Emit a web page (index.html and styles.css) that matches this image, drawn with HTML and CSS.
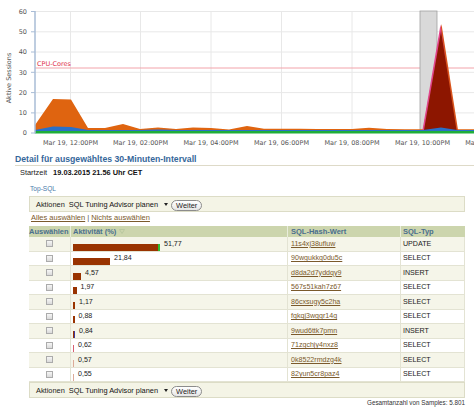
FILE: index.html
```html
<!DOCTYPE html>
<html lang="de">
<head>
<meta charset="utf-8">
<title>Top-SQL</title>
<link rel="stylesheet" href="styles.css">
</head>
<body>
<svg class="chart" width="474" height="153" viewBox="0 0 474 153" xmlns="http://www.w3.org/2000/svg">
  <g stroke="#e8e8e8" stroke-width="1">
    <line x1="35" x2="474" y1="11.5" y2="11.5"/>
    <line x1="35" x2="474" y1="31.8" y2="31.8"/>
    <line x1="35" x2="474" y1="52" y2="52"/>
    <line x1="35" x2="474" y1="72.3" y2="72.3"/>
    <line x1="35" x2="474" y1="92.6" y2="92.6"/>
    <line x1="35" x2="474" y1="112.9" y2="112.9"/>
    <line x1="70.5" x2="70.5" y1="11" y2="133"/>
    <line x1="140.5" x2="140.5" y1="11" y2="133"/>
    <line x1="211" x2="211" y1="11" y2="133"/>
    <line x1="281.5" x2="281.5" y1="11" y2="133"/>
    <line x1="352" x2="352" y1="11" y2="133"/>
    <line x1="422.5" x2="422.5" y1="11" y2="133"/>
  </g>
  <line x1="35" x2="474" y1="68" y2="68" stroke="#f2a3aa" stroke-width="1"/>
  <rect x="420" y="11" width="17" height="120" fill="#d9d9d9" stroke="#a0a0a0" stroke-width="0.8"/>
  <polygon fill="#df6410" points="35,125 53,99 71,99.5 88,128 105,128 123,124 140,129 158,127.5 176,129 193,127.5 211,128 229,129.5 247,126 264,128.8 282,128.8 300,128.8 317,129 335,129 352,129 369,127.7 387,129 405,129.3 423,129.3 441,128.5 457,129.3 474,129.3 474,133 35,133"/>
  <polygon fill="#d9541c" points="423,130 441.5,24 458,130"/>
  <polygon fill="#e2468c" points="422.5,130 440.5,24.5 455,130"/>
  <polygon fill="#8d1600" points="424,130 441,31 456.5,130"/>
  <polygon fill="#2a70c8" points="35,130 53,126.5 71,127 88,130 140,130 158,129.5 176,130 423,130 441,127.5 457,130 474,130 474,133 35,133"/>
  <rect x="35" y="131" width="439" height="2.5" fill="#1fae3a"/>
  <g stroke="#a9bcd6" stroke-width="1">
    <line x1="35" x2="35" y1="11" y2="133.5" stroke-width="1.5"/>
    <line x1="31" x2="35" y1="11.5" y2="11.5"/>
    <line x1="31" x2="35" y1="31.8" y2="31.8"/>
    <line x1="31" x2="35" y1="52" y2="52"/>
    <line x1="31" x2="35" y1="72.3" y2="72.3"/>
    <line x1="31" x2="35" y1="92.6" y2="92.6"/>
    <line x1="31" x2="35" y1="112.9" y2="112.9"/>
    <line x1="31" x2="35" y1="133" y2="133"/>
  </g>
  <g class="axis-text" font-family="DejaVu Sans, sans-serif" font-size="6.5" fill="#555">
    <text x="27" y="13.8" text-anchor="end">60</text>
    <text x="27" y="34.1" text-anchor="end">50</text>
    <text x="27" y="54.3" text-anchor="end">40</text>
    <text x="27" y="74.6" text-anchor="end">30</text>
    <text x="27" y="94.9" text-anchor="end">20</text>
    <text x="27" y="115.2" text-anchor="end">10</text>
    <text x="27" y="135.3" text-anchor="end">0</text>
    <text x="70.5" y="145" text-anchor="middle">Mar 19, 12:00PM</text>
    <text x="140.5" y="145" text-anchor="middle">Mar 19, 02:00PM</text>
    <text x="211" y="145" text-anchor="middle">Mar 19, 04:00PM</text>
    <text x="281.5" y="145" text-anchor="middle">Mar 19, 06:00PM</text>
    <text x="352" y="145" text-anchor="middle">Mar 19, 08:00PM</text>
    <text x="422.5" y="145" text-anchor="middle">Mar 19, 10:00PM</text>
    <text x="493" y="145" text-anchor="middle">Mar 20, 12:00AM</text>
    <text transform="translate(10.5 78) rotate(-90)" text-anchor="middle">Aktive Sessions</text>
    <text x="37" y="66.3" fill="#e0304a">CPU-Cores</text>
  </g>
</svg>

<h2 class="section-title">Detail für ausgewähltes 30-Minuten-Intervall</h2>
<div class="start"><span>Startzeit</span><b>19.03.2015 21.56 Uhr CET</b></div>

<div class="region">
  <div class="region-title">Top-SQL</div>
  <div class="actions">
    <span class="label">Aktionen</span>
    <span class="fake-select">SQL Tuning Advisor planen<span class="caret"></span></span>
    <button class="btn" type="button">Weiter</button>
  </div>
  <div class="links"><a href="#">Alles auswählen</a><span class="sep">|</span><a href="#">Nichts auswählen</a></div>

  <div class="grid">
    <div class="th th-first">Auswählen</div>
    <div class="th th-act">Aktivität (%)<svg class="sort" width="6" height="5" viewBox="0 0 6 5"><polygon points="0.5,0.5 5.5,0.5 3,4.5" fill="none" stroke="#b4c49c" stroke-width="0.8"/></svg></div>
    <div class="th th-pad">SQL-Hash-Wert</div>
    <div class="th th-pad2">SQL-Typ</div>

    <div class="row odd">
      <div class="td td-cb"><input class="cb" type="checkbox"></div>
      <div class="td td-act"><span class="bar"><span class="seg red" style="width:85px"></span><span class="seg green" style="width:2px"></span></span><span class="num">51,77</span></div>
      <div class="td td-hash"><a href="#">11s4xj38ufluw</a></div>
      <div class="td td-typ">UPDATE</div>
    </div>
    <div class="row">
      <div class="td td-cb"><input class="cb" type="checkbox"></div>
      <div class="td td-act"><span class="bar"><span class="seg red" style="width:37px"></span></span><span class="num">21,84</span></div>
      <div class="td td-hash"><a href="#">90wgukkg0du5c</a></div>
      <div class="td td-typ">SELECT</div>
    </div>
    <div class="row odd">
      <div class="td td-cb"><input class="cb" type="checkbox"></div>
      <div class="td td-act"><span class="bar"><span class="seg red" style="width:8px"></span></span><span class="num">4,57</span></div>
      <div class="td td-hash"><a href="#">d8da2d7yddqy9</a></div>
      <div class="td td-typ">INSERT</div>
    </div>
    <div class="row">
      <div class="td td-cb"><input class="cb" type="checkbox"></div>
      <div class="td td-act"><span class="bar"><span class="seg red" style="width:3.5px"></span></span><span class="num">1,97</span></div>
      <div class="td td-hash"><a href="#">567s51kah7z67</a></div>
      <div class="td td-typ">SELECT</div>
    </div>
    <div class="row odd">
      <div class="td td-cb"><input class="cb" type="checkbox"></div>
      <div class="td td-act"><span class="bar"><span class="seg red" style="width:2px"></span></span><span class="num">1,17</span></div>
      <div class="td td-hash"><a href="#">86cxsugy5c2ha</a></div>
      <div class="td td-typ">SELECT</div>
    </div>
    <div class="row">
      <div class="td td-cb"><input class="cb" type="checkbox"></div>
      <div class="td td-act"><span class="bar"><span class="seg red" style="width:1.5px"></span></span><span class="num">0,88</span></div>
      <div class="td td-hash"><a href="#">fgkqj3wggr14g</a></div>
      <div class="td td-typ">SELECT</div>
    </div>
    <div class="row odd">
      <div class="td td-cb"><input class="cb" type="checkbox"></div>
      <div class="td td-act"><span class="bar"><span class="seg red" style="width:1px"></span><span class="seg blue" style="width:1px"></span></span><span class="num">0,84</span></div>
      <div class="td td-hash"><a href="#">9wud6ttk7pmn</a></div>
      <div class="td td-typ">INSERT</div>
    </div>
    <div class="row">
      <div class="td td-cb"><input class="cb" type="checkbox"></div>
      <div class="td td-act"><span class="bar"><span class="seg pink" style="width:1px"></span></span><span class="num">0,62</span></div>
      <div class="td td-hash"><a href="#">71zgchjy4nxz8</a></div>
      <div class="td td-typ">SELECT</div>
    </div>
    <div class="row odd">
      <div class="td td-cb"><input class="cb" type="checkbox"></div>
      <div class="td td-act"><span class="bar"><span class="seg tan" style="width:1px"></span></span><span class="num">0,57</span></div>
      <div class="td td-hash"><a href="#">0k8522rmdzg4k</a></div>
      <div class="td td-typ">SELECT</div>
    </div>
    <div class="row">
      <div class="td td-cb"><input class="cb" type="checkbox"></div>
      <div class="td td-act"><span class="bar"><span class="seg tan" style="width:1px"></span></span><span class="num">0,55</span></div>
      <div class="td td-hash"><a href="#">82yun5cr8paz4</a></div>
      <div class="td td-typ">SELECT</div>
    </div>
  </div>

  <div class="actions actions-bottom">
    <span class="label">Aktionen</span>
    <span class="fake-select">SQL Tuning Advisor planen<span class="caret"></span></span>
    <button class="btn" type="button">Weiter</button>
  </div>
  <div class="total">Gesamtanzahl von Samples: 5.801</div>
</div>
</body>
</html>
```

FILE: styles.css
```css
html, body {
  margin: 0;
  padding: 0;
  background: #ffffff;
}

body {
  width: 474px;
  height: 409px;
  overflow: hidden;
  font-family: "Liberation Sans", Arial, sans-serif;
  color: #222222;
}

.chart {
  display: block;
  width: 474px;
  height: 153px;
}

.section-title {
  margin: 0 0 0 15px;
  font-size: 8.7px;
  line-height: 12px;
  font-weight: bold;
  color: #35679a;
  border-bottom: 1px solid #dedac8;
}

.start {
  display: flex;
  gap: 6px;
  padding: 1px 0 0 20px;
  font-size: 7.4px;
  line-height: 12px;
  color: #222222;
}

.start b {
  color: #111111;
}

.region {
  margin-left: 29px;
  width: 436px;
}

.region-title {
  margin: 5px 0 0 1px;
  font-size: 6.6px;
  line-height: 10px;
  color: #4a7bab;
}

.actions {
  margin-top: 2px;
  height: 14px;
  display: flex;
  align-items: center;
  padding-left: 6px;
  border: 1px solid #dcdcc6;
  background: #f4f4e6;
  font-size: 7.4px;
  color: #222222;
}

.actions-bottom {
  margin-top: 0;
}

.label {
  margin-right: 4px;
}

.fake-select {
  display: flex;
  align-items: center;
  gap: 6px;
  color: #111111;
}

.caret {
  width: 0;
  height: 0;
  border-left: 2.5px solid transparent;
  border-right: 2.5px solid transparent;
  border-top: 3px solid #222222;
}

.btn {
  align-self: flex-end;
  margin: 0 0 0 3px;
  height: 11px;
  padding: 0 4px;
  border: 1px solid #8c8c8c;
  border-radius: 6px;
  background: linear-gradient(#ffffff, #e6e6e6);
  font-family: "Liberation Sans", Arial, sans-serif;
  font-size: 7.4px;
  line-height: 9px;
  color: #222222;
}

.links {
  padding-left: 2px;
  font-size: 7.5px;
  line-height: 12px;
  color: #555555;
}

.links a {
  color: #7b5a2c;
  text-decoration: underline;
}

.sep {
  margin: 0 2px;
}

.grid {
  margin-top: 2px;
  display: grid;
  grid-template-columns: 42px 217px 113px 64px;
  grid-template-rows: 11px repeat(10, 14.5px);
}

.th {
  background: #ccd5ad;
  color: #4a6f8e;
  font-weight: bold;
  font-size: 7.5px;
  line-height: 11px;
  white-space: nowrap;
  border-right: 1px solid #e9eddb;
  box-sizing: border-box;
}

.th-act {
  display: flex;
  align-items: center;
  gap: 3px;
  padding-left: 2px;
}

.th-pad {
  padding-left: 3px;
}

.th-pad2 {
  padding-left: 2px;
  border-right: none;
}

.sort {
  display: block;
}

.row {
  display: contents;
}

.td {
  display: flex;
  align-items: center;
  box-sizing: border-box;
  border-bottom: 1px solid #e3e3d3;
  border-right: 1px solid #e3e3d3;
  background: #ffffff;
  font-size: 7.1px;
  white-space: nowrap;
  color: #222222;
}

.row.odd .td {
  background: #f5f5e9;
}

.td-cb {
  justify-content: center;
}

.cb {
  appearance: none;
  -webkit-appearance: none;
  margin: 0;
  width: 7px;
  height: 7px;
  box-sizing: border-box;
  border: 1px solid #ababab;
  border-radius: 0;
  background: linear-gradient(#f6f6f6, #dadada);
}

.td-act {
  padding-left: 2px;
}

.bar {
  display: flex;
  height: 7px;
  margin-top: 7px;
}

.seg {
  display: block;
  height: 100%;
}

.seg.red { background: #993300; }
.seg.green { background: #2fbf2f; }
.seg.blue { background: #3b3ba6; }
.seg.pink { background: #d86070; }
.seg.tan { background: #dcaa98; }

.num {
  margin-left: 4px;
}

.td-hash {
  padding-left: 3px;
}

.td-hash a {
  color: #7b5a2c;
  text-decoration: underline;
}

.td-typ {
  padding-left: 2px;
}

.total {
  text-align: right;
  font-size: 6.3px;
  line-height: 10px;
  color: #333333;
}
```
